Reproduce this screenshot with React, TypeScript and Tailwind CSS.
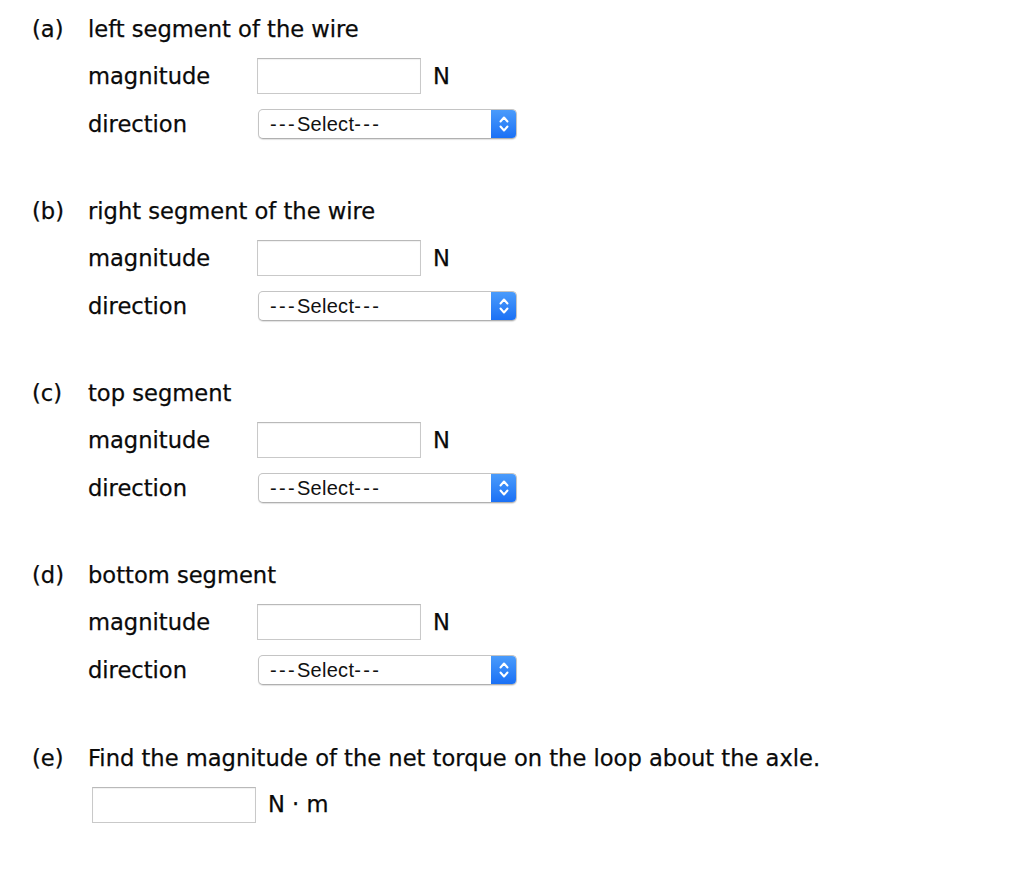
import React from 'react';

const sections = [
  { key: 'a', title: 'left segment of the wire' },
  { key: 'b', title: 'right segment of the wire' },
  { key: 'c', title: 'top segment' },
  { key: 'd', title: 'bottom segment' },
];

const font = { fontFamily: '"DejaVu Sans", Verdana, sans-serif' };

const TextBox: React.FC<{ className?: string }> = ({ className = '' }) => (
  <div
    className={`h-[36px] w-[164px] bg-white border border-[#c9c9c9] border-t-[#b9b9b9] shadow-[inset_0_1px_1px_rgba(0,0,0,0.06)] ${className}`}
  />
);

const SelectBox: React.FC = () => (
  <div className="ml-px flex h-[30px] w-[259px] overflow-hidden rounded-[5px] border border-[#c4c4c4] border-b-[#b0b0b0] bg-white shadow-[0_1px_1px_rgba(0,0,0,0.12)]">
    <div className="flex flex-1 items-center pl-[11px] text-[20px] text-[#111] font-['Liberation_Sans',Arial,sans-serif] [-webkit-text-stroke:0px]">
      <span className="tracking-[2.3px]">---</span>
      <span className="tracking-[0.3px]">Select</span>
      <span className="tracking-[2.3px]">---</span>
    </div>
    <div className="flex w-[25px] items-center justify-center bg-gradient-to-b from-[#4a9bfb] to-[#1a70f5]">
      <svg width="10" height="18" viewBox="0 0 10 18" fill="none" stroke="white" strokeWidth="2" strokeLinecap="round" strokeLinejoin="round">
        <path d="M1.5 6.5 L5 2.5 L8.5 6.5" />
        <path d="M1.5 11.5 L5 15.5 L8.5 11.5" />
      </svg>
    </div>
  </div>
);

export default function App() {
  return (
    <div
      className="min-h-[893px] w-[1024px] bg-white pl-[32px] pt-[14px] text-[22.6px] text-[#0a0a0a] [-webkit-text-stroke:0.25px_#0a0a0a]"
      style={font}
    >
      {sections.map((s) => (
        <div key={s.key} className="mb-[57px] flex">
          <div className="w-[56px] pt-[1px] leading-[28px]">({s.key})</div>
          <div className="flex flex-col">
            <div className="h-[28px] pt-[1px] leading-[28px]">{s.title}</div>
            <div className="mt-[16px] flex h-[36px] items-center">
              <div className="w-[169px] pt-[2px]">magnitude</div>
              <TextBox />
              <span className="ml-[12px] pt-[2px]">N</span>
            </div>
            <div className="mt-[15px] flex h-[30px] items-center">
              <div className="w-[169px] pt-[2px]">direction</div>
              <SelectBox />
            </div>
          </div>
        </div>
      ))}
      <div className="flex">
        <div className="w-[56px] pt-[2px] leading-[28px]">(e)</div>
        <div className="flex flex-col">
          <div className="h-[28px] pt-[2px] leading-[28px]">Find the magnitude of the net torque on the loop about the axle.</div>
          <div className="mt-[16px] flex h-[36px] items-center pl-[4px]">
            <TextBox className="mt-[1px]" />
            <span className="ml-[12px] pt-[2px]">N · m</span>
          </div>
        </div>
      </div>
    </div>
  );
}
